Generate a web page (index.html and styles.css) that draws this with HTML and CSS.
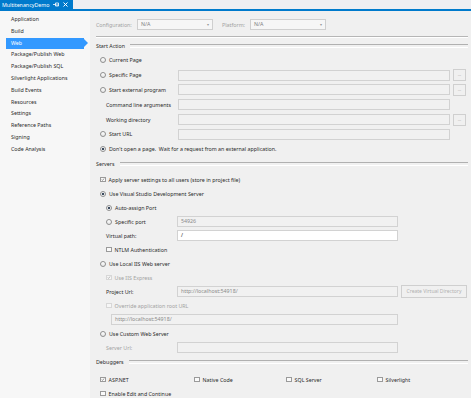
FILE: index.html
```html
<!doctype html>
<html>
<head>
<meta charset="UTF-8">
<title>MultitenancyDemo - Web</title>
<link rel="stylesheet" href="styles.css">
</head>
<body>
<!-- document tab -->
<div class="tabbar">
	<div class="doctab">
		<span>MultitenancyDemo</span>
		<svg class="pin" width="6" height="5" viewBox="0 0 6 5"><path d="M0 2.5h2.5M2.5 1v3M2.5 1h3v3h-3M2.5 3h3" fill="none" stroke="#fff" stroke-width="0.8"/></svg>
		<svg class="close" width="5" height="5" viewBox="0 0 5 5"><path d="M0.5 0.5l4 4M4.5 0.5l-4 4" stroke="#fff" stroke-width="1"/></svg>
	</div>
</div>
<div class="panel">
	<!-- left page list -->
	<ul class="nav">
		<li>Application</li>
		<li>Build</li>
		<li class="on">Web</li>
		<li>Package/Publish Web</li>
		<li>Package/Publish SQL</li>
		<li>Silverlight Applications</li>
		<li>Build Events</li>
		<li>Resources</li>
		<li>Settings</li>
		<li>Reference Paths</li>
		<li>Signing</li>
		<li>Code Analysis</li>
	</ul>
	<div class="content">
		<div class="config">
			<span class="dim cfgl">Configuration:</span>
			<span class="select">N/A<i>&#9662;</i></span>
			<span class="dim plat">Platform:</span>
			<span class="select">N/A<i>&#9662;</i></span>
		</div>
		<div class="rule"></div>

		<!-- start action -->
		<div class="head">Start Action</div>
		<div class="sa">
			<div class="row"><span class="lab"><b class="radio"></b>Current Page</span></div>
			<div class="row"><span class="lab"><b class="radio"></b>Specific Page</span><span class="box"></span><span class="btn">...</span></div>
			<div class="row"><span class="lab"><b class="radio"></b>Start external program</span><span class="box"></span><span class="btn">...</span></div>
			<div class="row"><span class="lab sub">Command line arguments</span><span class="box"></span></div>
			<div class="row"><span class="lab sub">Working directory</span><span class="box"></span><span class="btn">...</span></div>
			<div class="row"><span class="lab"><b class="radio"></b>Start URL</span><span class="box"></span></div>
			<div class="row"><span class="lab wide"><b class="radio on"></b>Don't open a page.&nbsp; Wait for a request from an external application.</span></div>
		</div>

		<!-- servers -->
		<div class="head">Servers</div>
		<div class="sv">
			<div class="row"><span class="lab wide"><b class="check on"></b>Apply server settings to all users (store in project file)</span></div>
			<div class="row"><span class="lab wide"><b class="radio on"></b>Use Visual Studio Development Server</span></div>
			<div class="row"><span class="lab in"><b class="radio on"></b>Auto-assign Port</span></div>
			<div class="row"><span class="lab in"><b class="radio"></b>Specific port</span><span class="box short dim">54926</span></div>
			<div class="row"><span class="lab sub">Virtual path:</span><span class="box short white">/</span></div>
			<div class="row"><span class="lab in"><b class="check"></b>NTLM Authentication</span></div>
			<div class="row"><span class="lab wide"><b class="radio"></b>Use Local IIS Web server</span></div>
			<div class="row"><span class="lab in dim"><b class="check on off"></b>Use IIS Express</span></div>
			<div class="row"><span class="lab sub">Project Url:</span><span class="box short dim">http://localhost:54918/</span><span class="btn vd">Create Virtual Directory</span></div>
			<div class="row"><span class="lab in wide dim"><b class="check off"></b>Override application root URL</span></div>
			<div class="row"><span class="box long">http://localhost:54918/</span></div>
			<div class="row"><span class="lab wide"><b class="radio"></b>Use Custom Web Server</span></div>
			<div class="row"><span class="lab sub dim">Server Url:</span><span class="box short"></span></div>
		</div>

		<!-- debuggers -->
		<div class="head dh">Debuggers</div>
		<div class="dbg">
			<span class="lab"><b class="check on"></b>ASP.NET</span>
			<span class="lab"><b class="check"></b>Native Code</span>
			<span class="lab"><b class="check"></b>SQL Server</span>
			<span class="lab"><b class="check"></b>Silverlight</span>
		</div>
		<div class="row"><span class="lab wide"><b class="check"></b>Enable Edit and Continue</span></div>
	</div>
</div>
</body>
</html>
```
FILE: styles.css
```css
* {
	margin: 0;
	padding: 0;
	box-sizing: border-box;
}

body {
	width: 474px;
	height: 402px;
	background: #fff;
	font-family: "Noto Sans", "Segoe UI", sans-serif;
	font-size: 5.3px;
	color: #2a2a2a;
	white-space: nowrap;
}

/* tab strip */
.tabbar {
	display: flex;
	width: 471px;
	height: 11px;
	background: #eeeef2;
	border-bottom: 2px solid #007acc;
}

.doctab {
	display: flex;
	align-items: center;
	gap: 4px;
	height: 9px;
	padding: 0 5px 0 2px;
	background: #007acc;
	color: #fff;
}

/* page layout */
.panel {
	display: flex;
	width: 471px;
	height: 387px;
}

.nav {
	flex: none;
	width: 90px;
	padding: 3px 0 0 6px;
	background: #f7f7f7;
	list-style: none;
}

.nav li {
	position: relative;
	width: 78px;
	height: 11.8px;
	line-height: 11.8px;
	padding-left: 5px;
}

.nav li.on {
	background: #3399ff;
	color: #fff;
}

.nav li.on:after {
	content: "";
	position: absolute;
	left: 100%;
	top: 1px;
	border-left: 4px solid #3399ff;
	border-top: 4.9px solid transparent;
	border-bottom: 4.9px solid transparent;
}

.content {
	flex: 1;
	padding: 8px 3px 0 6px;
	background: #f0f0f0;
}

.dim {
	color: #a2a2a2;
}

/* configuration bar */
.config {
	display: flex;
	align-items: center;
	height: 11px;
}

.cfgl {
	width: 41px;
}

.plat {
	width: 28px;
	margin-left: 9px;
}

.select {
	position: relative;
	width: 76px;
	height: 11px;
	line-height: 9px;
	padding-left: 3px;
	background: #f6f6f6;
	border: 1px solid #cfcfcf;
	color: #808080;
}

.select i {
	position: absolute;
	right: 3px;
	top: 0;
	font-style: normal;
	font-size: 4px;
	line-height: 9px;
	color: #999;
}

.rule {
	height: 2px;
	margin-top: 6px;
	border-top: 1px solid #b6b6b6;
	border-bottom: 1px solid #fff;
}

/* group headings */
.head {
	display: flex;
	align-items: center;
	gap: 5px;
	height: 15px;
}

.head:after {
	content: "";
	flex: 1;
	height: 2px;
	border-top: 1px solid #b0b0b0;
	border-bottom: 1px solid #fff;
}

.sv {
	margin-top: 1px;
}

.dh {
	height: 14px;
}

/* rows */
.row {
	display: flex;
	align-items: center;
	height: 14px;
}

.sa .row {
	height: 14.8px;
}

.lab {
	display: flex;
	align-items: center;
	flex: none;
	width: 82px;
	padding-left: 4px;
}

.lab.wide {
	width: auto;
}

.lab.sub {
	padding-left: 10px;
}

.lab.in {
	padding-left: 10px;
}

.radio,
.check {
	flex: none;
	width: 6px;
	height: 6px;
	margin-right: 3px;
	border: 1px solid #8e8f8f;
	background: linear-gradient(#fff, #e6e6e6);
}

.radio {
	border-radius: 50%;
}

.radio.on {
	background: radial-gradient(circle, #3a4a5e 0 1.4px, #fff 1.6px);
}

.check {
	width: 5.6px;
	height: 5.6px;
	border-color: #9a9a9a;
	background: #fafafa;
}

.check.on {
	background: #fafafa url("data:image/svg+xml;utf8,<svg xmlns='http://www.w3.org/2000/svg' viewBox='0 0 6 6'><path d='M1 3.2l1.2 1.3L5 1' fill='none' stroke='%23333' stroke-width='0.9'/></svg>") center/100% no-repeat;
}

.check.off {
	border-color: #c8c8c8;
	opacity: .6;
}

.box {
	flex: none;
	width: 272px;
	height: 11px;
	line-height: 9px;
	padding-left: 3px;
	background: #f1f1f1;
	border: 1px solid #d2d2d2;
	color: #8a8a8a;
}

.box.short {
	width: 221px;
	margin-left: -1px;
}

.box.long {
	width: 287px;
	margin-left: 15px;
}

.box.white {
	background: #fff;
	color: #1e1e1e;
}

.btn {
	flex: none;
	width: 13px;
	height: 12px;
	margin-left: 3px;
	line-height: 8px;
	text-align: center;
	background: #f0f0f0;
	border: 1px solid #cfcfcf;
	color: #b0b0b0;
	font-size: 4.5px;
}

.btn.vd {
	width: 66px;
	height: 13px;
	line-height: 11px;
	font-size: 5px;
}

/* debugger checkboxes */
.dbg {
	display: grid;
	grid-template-columns: 94px 92px 91px auto;
	align-items: center;
	height: 14px;
	margin-top: 4px;
}
```
